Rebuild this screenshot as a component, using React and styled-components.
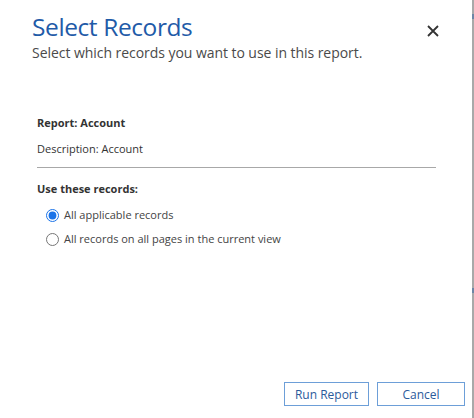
import React, { useState } from "react";
import styled, { createGlobalStyle } from "styled-components";

const GlobalStyle = createGlobalStyle`
  html, body {
    margin: 0;
    padding: 0;
    background: #ffffff;
  }
  body {
    font-family: "Segoe UI", "Open Sans", "Noto Sans", sans-serif;
  }
`;

function SelectRecords() {
  const [scope, setScope] = useState("all");

  return (
    <Wrapper>
      <Dialog>
        <Header>
          <div>
            <Title>Select Records</Title>
            <Subtitle>Select which records you want to use in this report.</Subtitle>
          </div>
          <CloseButton aria-label="Close">
            <svg width="12" height="12" viewBox="0 0 12 12">
              <path d="M1 1 L11 11 M11 1 L1 11" stroke="#333" strokeWidth="1.8" />
            </svg>
          </CloseButton>
        </Header>

        <Body>
          <Label bold>Report: Account</Label>
          <Label>Description: Account</Label>
          <Divider />
          <Label bold className="use">Use these records:</Label>
          <Options>
            <Option>
              <Radio
                type="radio"
                name="scope"
                checked={scope === "all"}
                onChange={() => setScope("all")}
              />
              All applicable records
            </Option>
            <Option>
              <Radio
                type="radio"
                name="scope"
                checked={scope === "view"}
                onChange={() => setScope("view")}
              />
              All records on all pages in the current view
            </Option>
          </Options>
        </Body>

        <Footer>
          <Button wide="85px">Run Report</Button>
          <Button wide="88px">Cancel</Button>
        </Footer>
      </Dialog>
      <Scrollbar>
        <Mark />
        <Mark top="288px" />
      </Scrollbar>
    </Wrapper>
  );
}

const Wrapper = styled.section`
  display: flex;
  width: 474px;
  height: 418px;
  overflow: hidden;
`;

const Dialog = styled.div`
  flex: 1;
  display: flex;
  flex-direction: column;
  padding: 0 7px 0 32px;
`;

const Header = styled.div`
  display: flex;
  justify-content: space-between;
  align-items: flex-start;
  padding-top: 10px;
  padding-right: 25px;
`;

const Title = styled.h1`
  margin: 0;
  font-size: 24.5px;
  font-weight: 400;
  color: #1f5ba8;
  line-height: 34px;
  letter-spacing: -0.4px;
`;

const Subtitle = styled.p`
  margin: 0;
  font-size: 14px;
  color: #4a4a4a;
  line-height: 18px;
  letter-spacing: -0.05px;
`;

const CloseButton = styled.button`
  border: none;
  background: none;
  padding: 0;
  margin-top: 14px;
  width: 14px;
  height: 14px;
  display: flex;
  align-items: center;
  justify-content: center;
  cursor: pointer;
`;

const Body = styled.div`
  flex: 1;
  padding: 53px 29px 0 5px;

  .use {
    margin-top: 13px;
  }
`;

const Label = styled.div`
  font-size: 11px;
  font-weight: ${(p) => (p.bold ? 700 : 400)};
  color: #333;
  line-height: 16px;
  margin-bottom: 10px;
`;

const Divider = styled.hr`
  border: none;
  border-top: 1px solid #a8a8a8;
  margin: 0;
`;

const Options = styled.div`
  display: flex;
  flex-direction: column;
  gap: 8px;
  padding-left: 9px;
  margin-top: 1px;
`;

const Option = styled.label`
  display: flex;
  align-items: center;
  gap: 5px;
  font-size: 11px;
  color: #444;
  line-height: 16px;
`;

const Radio = styled.input`
  margin: 0;
  width: 13px;
  height: 13px;
  accent-color: #1a73e8;
`;

const Footer = styled.div`
  display: flex;
  justify-content: flex-end;
  gap: 8px;
  padding-bottom: 12px;
`;

const Button = styled.button`
  width: ${(p) => p.wide};
  height: 24px;
  background: #fff;
  border: 1px solid #6d9fd8;
  color: #2b5a9b;
  font-family: inherit;
  font-size: 12px;
  padding: 0;
  cursor: pointer;
`;

const Scrollbar = styled.div`
  position: relative;
  width: 2px;
  background: #a9a9a9;
`;

const Mark = styled.div`
  position: absolute;
  top: ${(p) => p.top || "14px"};
  left: 0;
  width: 2px;
  height: 5px;
  background: #6d86a6;
`;

export default function App() {
  return (
    <>
      <GlobalStyle />
      <SelectRecords />
    </>
  );
}
